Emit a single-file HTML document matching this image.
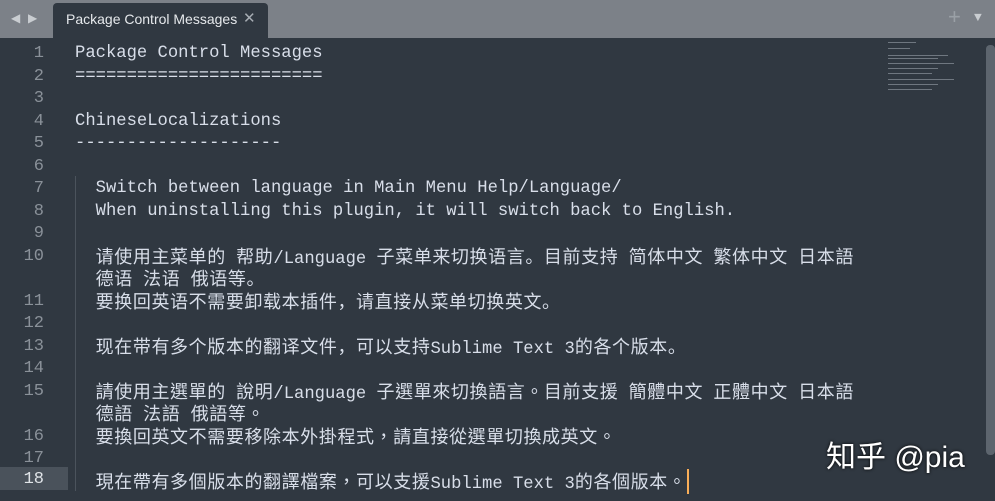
<!DOCTYPE html>
<html><head><meta charset="utf-8"><style>
*{margin:0;padding:0;box-sizing:border-box}
body{width:995px;height:499px;overflow:hidden;background:#303841;position:relative;font-family:"Liberation Mono",monospace}
#tabs{position:absolute;left:0;top:0;width:995px;height:38px;background:#7c8188}
#tab{position:absolute;left:53px;top:3px;width:215px;height:35px;background:#303841;border-radius:4px 4px 0 0;color:#e6e9ec;font:14px "Liberation Sans",sans-serif;line-height:32px;padding-left:13px}
#tab .x{position:absolute;left:190px;top:0;color:#a7adb4;font-size:15px}
.arr{position:absolute;top:11px;color:#c9cdd1;font-size:12px}
.hl{position:absolute;left:0;top:467px;width:68px;height:23px;background:#4a525b}
.n{position:absolute;left:0;width:44px;text-align:right;color:#8a9199;font-size:17px;line-height:22.5px}
.r{position:absolute;left:75px;color:#d8dee9;font-size:17.2px;line-height:22.5px;height:22.5px;white-space:pre}
.c{font-family:"Noto Sans CJK SC","WenQuanYi Zen Hei",sans-serif;font-size:18px;letter-spacing:0.6px;line-height:20px}
.t{font-family:"Noto Sans CJK TC","Noto Sans CJK SC",sans-serif;font-size:18px;letter-spacing:0.6px;line-height:20px}
#guide{position:absolute;left:75px;top:176px;width:1px;height:315px;background:#4b535c}
#cur{display:inline-block;width:2px;height:25px;background:#f9ae58;vertical-align:-6px;margin-left:1px}
#wm{position:absolute;left:826px;top:432px;color:#fff;font:30px "Liberation Sans","Noto Sans CJK SC",sans-serif;text-shadow:0 0 3px #000}
#sb{position:absolute;left:986px;top:45px;width:9px;height:410px;background:#5d656e;border-radius:4px}
.mm{position:absolute;height:1px;background:#6f7780}
#ed{position:absolute;left:0;top:2px;width:995px;height:499px}
</style></head><body>
<div id="tabs">
<span class="arr" style="left:11px">&#9664;</span><span class="arr" style="left:28px">&#9654;</span>
<div id="tab">Package Control Messages<span class="x">✕</span></div>
<span style="position:absolute;left:948px;top:4px;color:#9aa0a6;font:22px 'Liberation Sans'">+</span>
<span style="position:absolute;left:974px;top:10px;color:#c9cdd1;font-size:13px">&#9660;</span>
</div>
<div class="hl"></div>
<div id="guide"></div>
<div id="ed">
<div class="n" style="top:41px">1</div>
<div class="n" style="top:63.5px">2</div>
<div class="n" style="top:86px">3</div>
<div class="n" style="top:108.5px">4</div>
<div class="n" style="top:131px">5</div>
<div class="n" style="top:153.5px">6</div>
<div class="n" style="top:176px">7</div>
<div class="n" style="top:198.5px">8</div>
<div class="n" style="top:221px">9</div>
<div class="n" style="top:243.5px">10</div>
<div class="n" style="top:288.5px">11</div>
<div class="n" style="top:311px">12</div>
<div class="n" style="top:333.5px">13</div>
<div class="n" style="top:356px">14</div>
<div class="n" style="top:378.5px">15</div>
<div class="n" style="top:423.5px">16</div>
<div class="n" style="top:446px">17</div>
<div class="n" style="top:466.5px;color:#e0e4e8">18</div>

<div class="r" style="top:41px">Package Control Messages</div>
<div class="r" style="top:63.5px">========================</div>
<div class="r" style="top:108.5px">ChineseLocalizations</div>
<div class="r" style="top:131px">--------------------</div>
<div class="r" style="top:176px">  Switch between language in Main Menu Help/Language/</div>
<div class="r" style="top:198.5px">  When uninstalling this plugin, it will switch back to English.</div>
<div class="r" style="top:243.5px">  <span class="c">请使用主菜单的</span> <span class="c">帮助</span>/Language <span class="c">子菜单来切换语言。目前支持</span> <span class="c">简体中文</span> <span class="c">繁体中文</span> <span class="c">日本語</span></div>
<div class="r" style="top:266px">  <span class="c">德语</span> <span class="c">法语</span> <span class="c">俄语等。</span></div>
<div class="r" style="top:288.5px">  <span class="c">要换回英语不需要卸载本插件，请直接从菜单切换英文。</span></div>
<div class="r" style="top:333.5px">  <span class="c">现在带有多个版本的翻译文件，可以支持</span>Sublime Text 3<span class="c">的各个版本。</span></div>
<div class="r" style="top:378.5px">  <span class="t">請使用主選單的</span> <span class="t">說明</span>/Language <span class="t">子選單來切換語言。目前支援</span> <span class="t">簡體中文</span> <span class="t">正體中文</span> <span class="t">日本語</span></div>
<div class="r" style="top:401px">  <span class="t">德語</span> <span class="t">法語</span> <span class="t">俄語等。</span></div>
<div class="r" style="top:423.5px">  <span class="t">要換回英文不需要移除本外掛程式，請直接從選單切換成英文。</span></div>
<div class="r" style="top:466.5px">  <span class="t">現在帶有多個版本的翻譯檔案，可以支援</span>Sublime Text 3<span class="t">的各個版本。</span><span id="cur"></span></div>
</div>

<div class="mm" style="left:888px;top:42px;width:28px"></div>
<div class="mm" style="left:888px;top:48px;width:22px"></div>
<div class="mm" style="left:888px;top:55px;width:60px"></div>
<div class="mm" style="left:888px;top:58px;width:50px"></div>
<div class="mm" style="left:888px;top:63px;width:66px"></div>
<div class="mm" style="left:888px;top:68px;width:50px"></div>
<div class="mm" style="left:888px;top:73px;width:44px"></div>
<div class="mm" style="left:888px;top:79px;width:66px"></div>
<div class="mm" style="left:888px;top:84px;width:50px"></div>
<div class="mm" style="left:888px;top:89px;width:44px"></div>
<div id="sb"></div>
<div id="wm">知乎 @pia</div>
</body></html>
